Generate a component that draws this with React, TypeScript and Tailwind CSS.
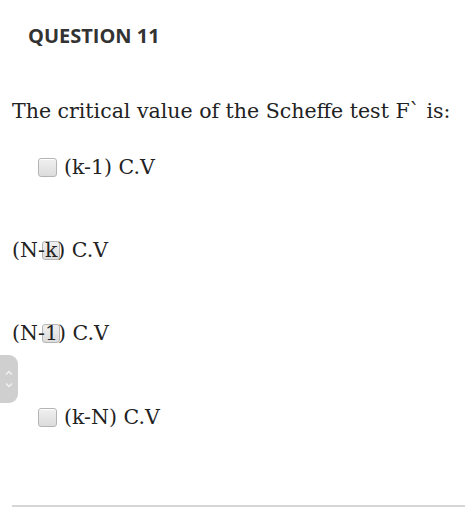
import React from 'react';

const Box = () => (
	<span className="inline-block w-[19px] h-[19px] rounded-[3px] border border-[#b4b4b4] bg-gradient-to-b from-[#f0f0f0] to-[#dcdcdc] shadow-[inset_0_1px_0_#fff]" />
);

const Option = ({ text }: { text: string }) => (
	<div className="flex items-center gap-[7px] pl-[38px]">
		<Box />
		<span>{text}</span>
	</div>
);

const Hidden = ({ before, mark, after }: { before: string; mark: string; after: string }) => (
	<div className="pl-3">
		{before}
		<span className="relative">
			<span className="absolute left-[-3px] top-[3px] -z-10 w-[18px] h-[19px] rounded-[3px] border border-[#b4b4b4] bg-gradient-to-b from-[#f0f0f0] to-[#dcdcdc]" />
			{mark}
		</span>
		{after}
	</div>
);

const App = () => {
	return (
		<div className="relative isolate w-[473px] h-[511px] bg-white overflow-hidden">
			<h1 className="pt-[22px] pl-[28px] text-[20px] leading-[28px] font-bold text-[#333] font-['Open_Sans',sans-serif]">
				QUESTION 11
			</h1>
			<div className="mt-[47px] text-[20.5px] leading-[28px] text-[#222] font-['DejaVu_Serif',serif]">
				<p className="pl-3">The critical value of the Scheffe test F` is:</p>
				<div className="mt-[28px]">
					<Option text="(k-1) C.V" />
				</div>
				<div className="mt-[55px]">
					<Hidden before="(N-" mark="k" after=") C.V" />
				</div>
				<div className="mt-[55px]">
					<Hidden before="(N-" mark="1" after=") C.V" />
				</div>
				<div className="mt-[56px]">
					<Option text="(k-N) C.V" />
				</div>
			</div>
			<div className="absolute left-0 top-[355px] w-[18px] h-[48px] rounded-r-[9px] bg-[#cfcfcf] flex flex-col items-center justify-center gap-[8px]">
				<svg width="8" height="5" viewBox="0 0 8 5" fill="none" stroke="#f2f2f2" strokeWidth="1.4">
					<path d="M1 4.5 L4 1.5 L7 4.5" />
				</svg>
				<svg width="8" height="5" viewBox="0 0 8 5" fill="none" stroke="#f2f2f2" strokeWidth="1.4">
					<path d="M1 0.5 L4 3.5 L7 0.5" />
				</svg>
			</div>
			<div className="absolute left-[12px] right-[8px] top-[505px] h-[2px] bg-[#d6d6d6]" />
		</div>
	);
};

export default App;
